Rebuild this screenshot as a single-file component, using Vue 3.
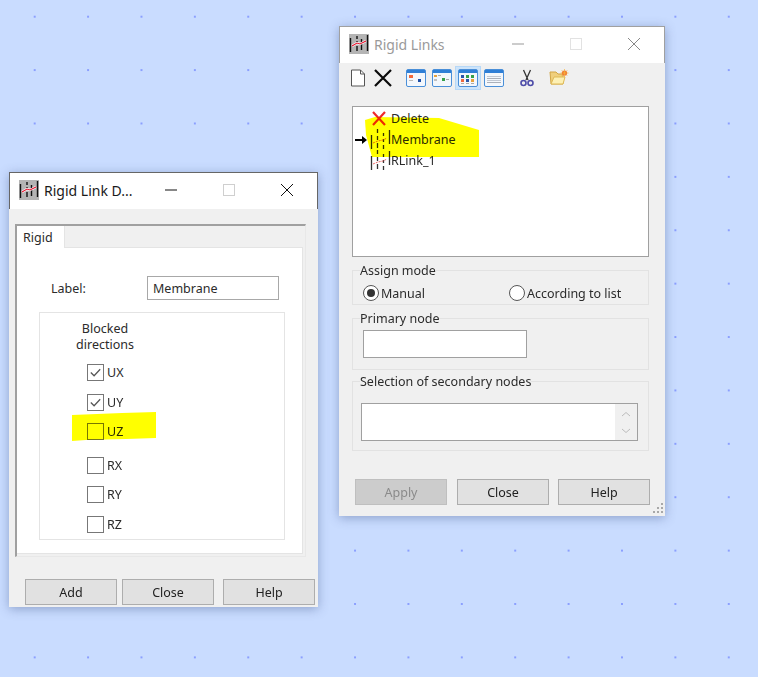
<script setup>
const treeRows = [
  { label: 'Delete', kind: 'delete' },
  { label: 'Membrane', kind: 'link', current: true },
  { label: 'RLink_1', kind: 'link' }
]
const directions = [
  { label: 'UX', checked: true, cls: 'd1' },
  { label: 'UY', checked: true, cls: 'd2' },
  { label: 'UZ', checked: false, cls: 'd3' },
  { label: 'RX', checked: false, cls: 'd4' },
  { label: 'RY', checked: false, cls: 'd5' },
  { label: 'RZ', checked: false, cls: 'd6' }
]
const viewTools = [
  { id: 'a', dots: [[3, 6, 4, 3, '#f0683c'], [3, 11, 4, 1, '#b9b9b9'], [12, 10, 3, 3, '#1d4fa8']] },
  { id: 'b', dots: [[2, 6, 3, 2, '#e8a13c'], [6, 6, 3, 1, '#a9a9a9'], [2, 10, 3, 2, '#c0c0c0'], [10, 9, 3, 3, '#35a04a'], [14, 10, 3, 1, '#a9a9a9']] },
  { id: 'c', active: true, dots: [[3, 6, 3, 3, '#2b55a8'], [8, 6, 3, 3, '#35a04a'], [13, 6, 3, 3, '#35a04a'], [3, 10, 3, 3, '#f0683c'], [8, 10, 3, 3, '#2b55a8'], [13, 10, 3, 3, '#e8a13c'], [3, 14, 3, 1, '#aaa'], [8, 14, 3, 1, '#aaa'], [13, 14, 3, 1, '#aaa']] },
  { id: 'd', dots: [[3, 7, 14, 1, '#c2c8d2'], [3, 9, 14, 1, '#aab0ba'], [3, 11, 14, 1, '#c2c8d2'], [3, 13, 14, 1, '#aab0ba']] }
]
</script>

<template>
  <div class="desktop">
    <!-- Rigid Link dialog -->
    <section class="win win-left">
      <header class="title">
        <svg class="app-icon" viewBox="0 0 20 20">
          <rect width="20" height="20" fill="#b4b4b4" />
          <path d="M1.500 4v14M18.500 1v16M8 2v3M8 7v3M8 12v5M12.500 5v11" stroke="#111" stroke-width="1.4" fill="none" />
          <path d="M3 12l5-3 3 1 6-3" stroke="#fff" stroke-width="2.4" fill="none" />
          <path d="M3 12l5-3 3 1 6-3" stroke="#e8112d" stroke-width="1.1" fill="none" />
        </svg>
        <span class="title-text">Rigid Link D...</span>
        <span class="caption">
          <svg viewBox="0 0 12 12"><path d="M0 6h12" stroke="#111" stroke-width="1" /></svg>
          <svg viewBox="0 0 12 12"><rect x="0.5" y="0.5" width="11" height="11" fill="none" stroke="#cfcfcf" /></svg>
          <svg viewBox="0 0 12 12"><path d="M0 0l12 12M12 0L0 12" stroke="#111" stroke-width="1" /></svg>
        </span>
      </header>
      <div class="left-body">
        <div class="tabs">
          <div class="tab-strip"><span class="tab">Rigid</span></div>
          <div class="tab-page">
            <div class="label-row">
              <span class="label-name">Label:</span>
              <span class="text-box">Membrane</span>
            </div>
            <div class="dir-group">
              <div class="dir-head">Blocked<br />directions</div>
              <div v-for="d in directions" :key="d.label" class="dir" :class="d.cls">
                <span class="check">
                  <svg v-if="d.checked" viewBox="0 0 16 16"><path d="M3 8l3.500 3.500L13 4.500" fill="none" stroke="#555" stroke-width="1.3" /></svg>
                </span>
                <span>{{ d.label }}</span>
              </div>
            </div>
          </div>
        </div>
        <div class="left-buttons">
          <button class="btn">Add</button>
          <button class="btn b-close">Close</button>
          <button class="btn b-help">Help</button>
        </div>
      </div>
      <svg class="marker" viewBox="0 0 309 435">
        <path d="M63 243l50-2 34-1v26l-30 1-40 1-14 1z" fill="#ffff00" />
      </svg>
    </section>

    <!-- Rigid Links -->
    <section class="win win-right">
      <header class="title faded">
        <svg class="app-icon" viewBox="0 0 20 20">
          <rect width="20" height="20" fill="#b4b4b4" />
          <path d="M1.500 4v14M18.500 1v16M8 2v3M8 7v3M8 12v5M12.500 5v11" stroke="#111" stroke-width="1.4" fill="none" />
          <path d="M3 12l5-3 3 1 6-3" stroke="#fff" stroke-width="2.4" fill="none" />
          <path d="M3 12l5-3 3 1 6-3" stroke="#e8112d" stroke-width="1.1" fill="none" />
        </svg>
        <span class="title-text">Rigid Links</span>
        <span class="caption">
          <svg viewBox="0 0 12 12"><path d="M0 6h12" stroke="#999" stroke-width="1" /></svg>
          <svg viewBox="0 0 12 12"><rect x="0.5" y="0.5" width="11" height="11" fill="none" stroke="#e2e2e2" /></svg>
          <svg viewBox="0 0 12 12"><path d="M0 0l12 12M12 0L0 12" stroke="#888" stroke-width="1" /></svg>
        </span>
      </header>
      <div class="right-body">
        <div class="toolbar">
          <span class="tool">
            <svg width="16" height="18" viewBox="0 0 16 18"><path d="M1.500 1h9l4 4v12h-13z" fill="#fff" stroke="#555" /><path d="M10.500 1v4h4" fill="none" stroke="#555" /></svg>
          </span>
          <span class="tool">
            <svg width="18" height="18" viewBox="0 0 18 18"><path d="M1 1l16 16M17 1L1 17" stroke="#0a0a0a" stroke-width="2.2" /></svg>
          </span>
          <span
            v-for="(t, i) in viewTools"
            :key="t.id"
            class="tool view"
            :class="{ 'tool-active': t.active, 'first-view': i === 0 }"
          >
            <svg width="20" height="18" viewBox="0 0 20 18">
              <rect x="0.5" y="0.5" width="19" height="17" rx="1.5" fill="#f3f7fc" stroke="#4a8fd8" />
              <rect x="1" y="1" width="18" height="3" fill="#2f7fd6" />
              <rect v-for="(r, k) in t.dots" :key="k" :x="r[0]" :y="r[1]" :width="r[2]" :height="r[3]" :fill="r[4]" />
            </svg>
          </span>
          <span class="tool scissors">
            <svg width="14" height="18" viewBox="0 0 14 18">
              <path d="M3.500 1l4.500 10M10.500 1L6 11" stroke="#333" stroke-width="1.3" fill="none" />
              <circle cx="3.5" cy="14" r="2.5" fill="none" stroke="#4d4ca8" stroke-width="1.6" />
              <circle cx="10.5" cy="14" r="2.5" fill="none" stroke="#4d4ca8" stroke-width="1.6" />
            </svg>
          </span>
          <span class="tool folder">
            <svg width="20" height="17" viewBox="0 0 20 17">
              <path d="M1 3h6l2 2h5v10H2z" fill="#f0cf7c" stroke="#d2a544" />
              <path d="M2 15l3-7h11l-2 7z" fill="#fdf0b4" stroke="#dfb955" />
              <circle cx="15.5" cy="4" r="2.6" fill="#f0692c" />
              <path d="M15.500 0v8M11.500 4h8M12.700 1.200l5.600 5.600M18.300 1.200l-5.600 5.600" stroke="#f5b23c" stroke-width="0.7" />
            </svg>
          </span>
        </div>

        <div class="tree">
          <div v-for="r in treeRows" :key="r.label" class="tree-row">
            <span class="arrow">
              <svg v-if="r.current" width="12" height="10" viewBox="0 0 12 10"><path d="M0 5h8" stroke="#000" stroke-width="2" /><path d="M7 1l5 4-5 4z" fill="#000" /></svg>
            </span>
            <span class="tree-icon">
              <svg v-if="r.kind === 'delete'" width="20" height="16" viewBox="0 0 20 16"><path d="M3 1l12 13M15 1L3 14" stroke="#ee2a2a" stroke-width="2.2" /></svg>
              <svg v-else width="21" height="22" viewBox="0 -2 21 22">
                <path d="M1.500 4v14M19.500 -1v14M7.500 -2v4M7.500 5v4M7.500 12v5M13.500 2v3M13.500 8v3M13.500 14v4" stroke="#333" stroke-width="1.3" fill="none" />
                <path d="M3 12l5-2 5-1 4-2" stroke="#ef6a6a" stroke-width="1" stroke-dasharray="2 1" fill="none" />
              </svg>
            </span>
            <span>{{ r.label }}</span>
          </div>
        </div>

        <fieldset class="group g-assign">
          <legend>Assign mode</legend>
          <div class="radios">
            <span class="radio-item first"><span class="radio on"></span>Manual</span>
            <span class="radio-item"><span class="radio"></span>According to list</span>
          </div>
        </fieldset>
        <fieldset class="group g-primary">
          <legend>Primary node</legend>
          <div class="primary-box"></div>
        </fieldset>
        <fieldset class="group g-secondary">
          <legend>Selection of secondary nodes</legend>
          <div class="secondary-box">
            <div class="scroll">
              <svg width="10" height="7" viewBox="0 0 10 7"><path d="M1 5l4-3.500L9 5" fill="none" stroke="#bcbcbc" /></svg>
              <svg width="10" height="7" viewBox="0 0 10 7"><path d="M1 2l4 3.500L9 2" fill="none" stroke="#bcbcbc" /></svg>
            </div>
          </div>
        </fieldset>

        <div class="right-buttons">
          <button class="btn disabled">Apply</button>
          <button class="btn">Close</button>
          <button class="btn">Help</button>
        </div>
      </div>
      <svg class="grip" width="11" height="11" viewBox="0 0 11 11" fill="#a8a8a8">
        <rect x="8" y="0" width="2" height="2" /><rect x="4" y="4" width="2" height="2" /><rect x="8" y="4" width="2" height="2" />
        <rect x="0" y="8" width="2" height="2" /><rect x="4" y="8" width="2" height="2" /><rect x="8" y="8" width="2" height="2" />
      </svg>
      <svg class="marker" viewBox="0 0 326 490">
        <path d="M26 94l10-3 64 1 40 12v27H33l-6-22z" fill="#ffff00" />
      </svg>
    </section>
  </div>
</template>

<style scoped>
* { box-sizing: border-box; }
.desktop {
  position: relative;
  width: 758px;
  height: 677px;
  overflow: hidden;
  background-color: #c9dcff;
  background-image: radial-gradient(ellipse 1.3px 0.9px, #7f93ff 0, #7f93ff 60%, transparent 100%);
  background-size: 53.4px 53.4px;
  background-position: 8px -10px;
  font-family: "Noto Sans", "Open Sans", sans-serif;
  font-size: 12.5px;
  color: #2b2b2b;
}
.win {
  position: absolute;
  display: flex;
  flex-direction: column;
  background: #f0f0f0;
  box-shadow: 0 2px 10px rgba(70, 90, 140, 0.45);
  filter: blur(0.3px);
}
.win-left { left: 9px; top: 172px; width: 309px; height: 435px; }
.win-right { left: 339px; top: 26px; width: 326px; height: 490px; }
.title {
  height: 37px;
  flex: none;
  display: flex;
  align-items: center;
  background: #fff;
  padding: 0 0 2px 9px;
  border-top: 1px solid #666;
  border-left: 1px solid #666;
  border-right: 1px solid #666;
  color: #1a1a1a;
}
.title.faded { color: #9a9a9a; border-color: #a0a0a0; }
.app-icon { width: 20px; height: 20px; flex: none; }
.title-text { margin-left: 5px; font-size: 14px; white-space: nowrap; }
.caption {
  margin-left: auto;
  display: flex;
  gap: 46px;
  padding-right: 24px;
}
.caption svg { width: 12px; height: 12px; display: block; }

/* left window */
.left-body { flex: 1; padding: 15px 2px 2px 6px; display: flex; flex-direction: column; }
.tabs {
  width: 291px;
  height: 333px;
  border-top: 2px solid #a0a0a0;
  border-left: 2px solid #a0a0a0;
  border-right: 1px solid #e8e8e8;
  border-bottom: 1px solid #e8e8e8;
  padding-right: 2px;
  padding-bottom: 2px;
  display: flex;
  flex-direction: column;
}
.tab-strip { height: 21px; flex: none; }
.tab {
  display: flex;
  align-items: center;
  padding-left: 6px;
  width: 48px;
  height: 22px;
  background: #fff;
  position: relative;
  z-index: 1;
  border-right: 1px solid #e4e4e4;
}
.tab-page {
  flex: 1;
  background: #fff;
  border-top: 1px solid #e4e4e4;
  border-right: 1px solid #e4e4e4;
  border-bottom: 1px solid #e4e4e4;
  padding: 28px 0 0 22px;
}
.label-row { display: flex; align-items: center; height: 24px; }
.label-name { margin-left: 12px; width: 96px; }
.text-box {
  width: 132px;
  height: 24px;
  border: 1px solid #a8a8a8;
  padding-left: 5px;
  display: flex;
  align-items: center;
}
.dir-group {
  margin-top: 12px;
  width: 246px;
  height: 228px;
  border: 1px solid #e4e4e4;
  padding-left: 47px;
  padding-top: 8px;
}
.dir-head { width: 36px; display: flex; flex-direction: column; align-items: center; text-align: center; line-height: 16px; white-space: nowrap; }
.dir { display: flex; align-items: center; gap: 3px; height: 17px; }
.d1 { margin-top: 11px; }
.d2, .d6 { margin-top: 13px; }
.d3 { margin-top: 12px; }
.d4 { margin-top: 17px; }
.d5 { margin-top: 12px; }
.check { width: 17px; height: 17px; border: 1px solid #777; background: #fff; display: block; }
.check svg { display: block; width: 15px; height: 15px; }
.left-buttons { display: flex; margin-top: 22px; padding-left: 10px; }
.b-close { margin-left: 5px; }
.b-help { margin-left: 9px; width: 93px; }

.btn {
  width: 92px;
  height: 26px;
  flex: none;
  background: #e1e1e1;
  border: 1px solid #adadad;
  font: inherit;
  color: #222;
  padding: 0;
}
.btn.disabled { background: #cccccc; border-color: #bfbfbf; color: #8a8a8a; }

/* right window */
.right-body { flex: 1; padding: 0 0 0 13px; display: flex; flex-direction: column; }
.toolbar { height: 29px; display: flex; align-items: center; margin-left: -7px; flex: none; }
.tool { width: 25px; height: 24px; display: flex; align-items: center; justify-content: center; flex: none; }
.view { width: 26px; }
.first-view { margin-left: 8px; }
.tool-active { background: #cde4fa; outline: 1px solid #b7d8f7; outline-offset: -1px; }
.scissors { margin-left: 7px; }
.folder { margin-left: 7px; }
.tree {
  margin-top: 14px;
  width: 297px;
  height: 151px;
  background: #fff;
  border: 1px solid #a0a0a0;
  padding-top: 1px;
  flex: none;
}
.tree-row { height: 21px; display: flex; align-items: center; }
.arrow { width: 17px; display: flex; justify-content: flex-end; padding-right: 3px; flex: none; }
.tree-icon { width: 21px; height: 21px; display: flex; align-items: center; justify-content: flex-start; flex: none; }
.group {
  margin: 0;
  width: 297px;
  border: 1px solid #e2e2e2;
  padding: 0;
  min-width: 0;
  flex: none;
}
.group legend { padding: 2px 0 0; margin-left: 7px; line-height: 18px; }
.g-assign { margin-top: 3px; height: 45px; }
.g-primary { margin-top: 3px; height: 62px; }
.g-secondary { margin-top: 1px; height: 80px; }
.radios { display: flex; padding: 5px 0 0 10px; }
.radio-item { display: flex; align-items: center; gap: 1px; height: 16px; }
.radio-item.first { width: 146px; }
.radio {
  width: 16px; height: 16px; border-radius: 50%;
  border: 1px solid #555; background: #fff;
  display: flex; align-items: center; justify-content: center;
  margin-right: 1px;
}
.radio.on::after { content: ""; width: 8px; height: 8px; border-radius: 50%; background: #333; }
.primary-box {
  margin: 2px 0 0 10px;
  width: 164px; height: 28px;
  background: #fff; border: 1px solid #a0a0a0;
}
.secondary-box {
  margin: 12px 0 0 8px;
  width: 277px; height: 38px;
  background: #fff; border: 1px solid #a0a0a0;
  display: flex; justify-content: flex-end;
}
.scroll {
  width: 22px; background: #f0f0f0;
  display: flex; flex-direction: column; align-items: center; justify-content: center; gap: 9px;
}
.right-buttons { display: flex; gap: 10px; margin-top: 28px; padding-left: 3px; }
.right-buttons .btn + .btn + .btn { margin-left: -1px; }
.grip { position: absolute; right: 1px; bottom: 2px; }
.marker {
  position: absolute;
  left: 0; top: 0;
  width: 100%; height: 100%;
  mix-blend-mode: multiply;
  pointer-events: none;
}
</style>
